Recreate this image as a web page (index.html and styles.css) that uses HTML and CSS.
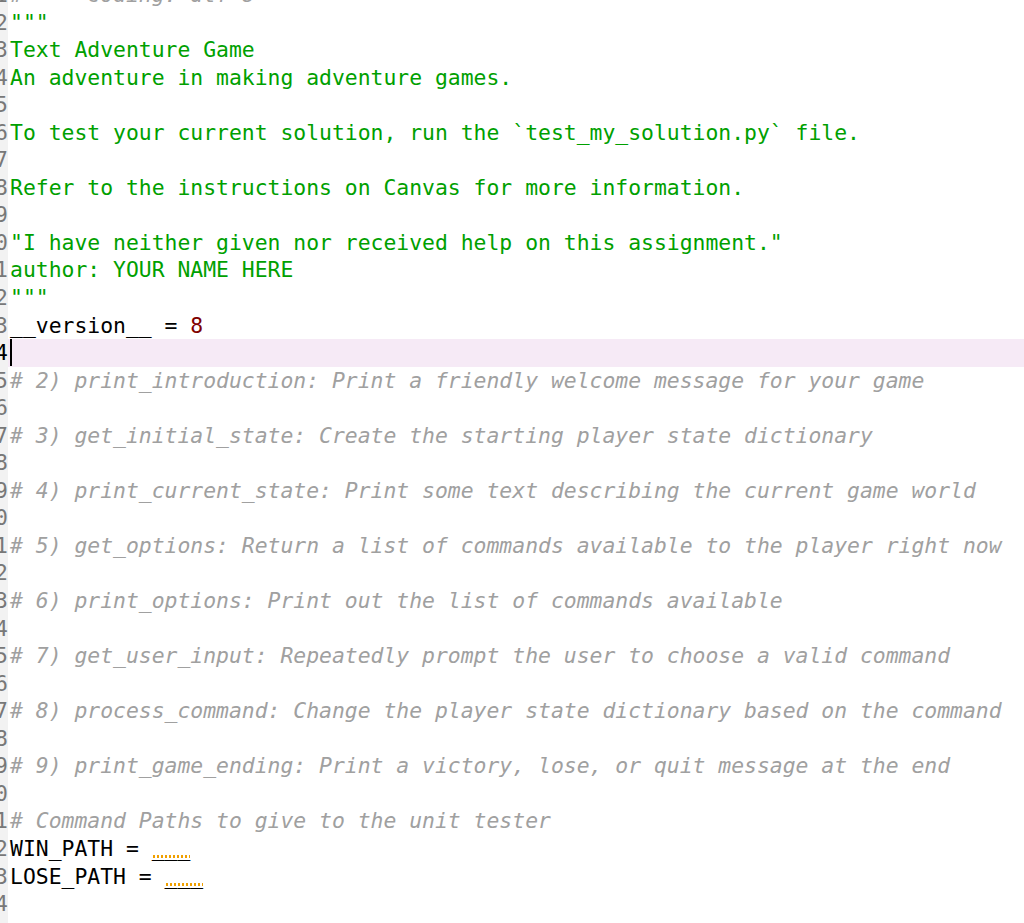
FILE: index.html
```html
<!DOCTYPE html>
<html>
<head>
<meta charset="utf-8">
<link rel="stylesheet" href="styles.css">
</head>
<body>
<div class="editor">
  <div class="line"><span class="num">1</span><span class="code cmt"># -*- coding: utf-8 -*-</span></div>
  <div class="line"><span class="num">2</span><span class="code str">"""</span></div>
  <div class="line"><span class="num">3</span><span class="code str">Text Adventure Game</span></div>
  <div class="line"><span class="num">4</span><span class="code str">An adventure in making adventure games.</span></div>
  <div class="line"><span class="num">5</span><span class="code str"></span></div>
  <div class="line"><span class="num">6</span><span class="code str">To test your current solution, run the `test_my_solution.py` file.</span></div>
  <div class="line"><span class="num">7</span><span class="code str"></span></div>
  <div class="line"><span class="num">8</span><span class="code str">Refer to the instructions on Canvas for more information.</span></div>
  <div class="line"><span class="num">9</span><span class="code str"></span></div>
  <div class="line"><span class="num">10</span><span class="code str">"I have neither given nor received help on this assignment."</span></div>
  <div class="line"><span class="num">11</span><span class="code str">author: YOUR NAME HERE</span></div>
  <div class="line"><span class="num">12</span><span class="code str">"""</span></div>
  <div class="line"><span class="num">13</span><span class="code plain">__version__ = <span class="numlit">8</span></span></div>
  <div class="line current"><span class="num">14</span><span class="code plain"><span class="caret"></span></span></div>
  <div class="line"><span class="num">15</span><span class="code cmt"># 2) print_introduction: Print a friendly welcome message for your game</span></div>
  <div class="line"><span class="num">16</span><span class="code"></span></div>
  <div class="line"><span class="num">17</span><span class="code cmt"># 3) get_initial_state: Create the starting player state dictionary</span></div>
  <div class="line"><span class="num">18</span><span class="code"></span></div>
  <div class="line"><span class="num">19</span><span class="code cmt"># 4) print_current_state: Print some text describing the current game world</span></div>
  <div class="line"><span class="num">20</span><span class="code"></span></div>
  <div class="line"><span class="num">21</span><span class="code cmt"># 5) get_options: Return a list of commands available to the player right now</span></div>
  <div class="line"><span class="num">22</span><span class="code"></span></div>
  <div class="line"><span class="num">23</span><span class="code cmt"># 6) print_options: Print out the list of commands available</span></div>
  <div class="line"><span class="num">24</span><span class="code"></span></div>
  <div class="line"><span class="num">25</span><span class="code cmt"># 7) get_user_input: Repeatedly prompt the user to choose a valid command</span></div>
  <div class="line"><span class="num">26</span><span class="code"></span></div>
  <div class="line"><span class="num">27</span><span class="code cmt"># 8) process_command: Change the player state dictionary based on the command</span></div>
  <div class="line"><span class="num">28</span><span class="code"></span></div>
  <div class="line"><span class="num">29</span><span class="code cmt"># 9) print_game_ending: Print a victory, lose, or quit message at the end</span></div>
  <div class="line"><span class="num">30</span><span class="code"></span></div>
  <div class="line"><span class="num">31</span><span class="code cmt"># Command Paths to give to the unit tester</span></div>
  <div class="line"><span class="num">32</span><span class="code plain">WIN_PATH = <span class="warn">___</span></span></div>
  <div class="line"><span class="num">33</span><span class="code plain">LOSE_PATH = <span class="warn">___</span></span></div>
  <div class="line"><span class="num">34</span><span class="code"></span></div>
  <div class="line"><span class="num">35</span><span class="code"></span></div>
</div>
</body>
</html>
```

FILE: styles.css
```css
html, body {
  margin: 0;
  padding: 0;
  background: #ffffff;
  overflow: hidden;
}

.editor {
  margin-top: -19px;
  display: flex;
  flex-direction: column;
}

.line {
  display: flex;
  height: 27.55px;
  line-height: 27.55px;
  white-space: pre;
}

.num {
  width: 8px;
  flex: 0 0 8px;
  background: #f2f2f2;
  color: #787878;
  font-family: "DejaVu Sans Mono", monospace;
  font-size: 21.4px;
  overflow: hidden;
  direction: rtl;
  text-align: left;
}

.code {
  flex: 1;
  padding-left: 2px;
  font-family: "DejaVu Sans Mono", monospace;
  font-size: 21.4px;
}

.current .code {
  background: #f6eaf6;
}

.current .num {
  color: #000000;
}

.str {
  color: #00a000;
}

.cmt {
  color: #a0a0a0;
  font-style: italic;
}

.plain {
  color: #000000;
}

.numlit {
  color: #800000;
}

.caret {
  display: inline-block;
  width: 2px;
  height: 27px;
  background: #000000;
  vertical-align: top;
}

.warn {
  background-image: radial-gradient(circle, #f0a000 45%, transparent 55%);
  background-size: 4px 3px;
  background-repeat: repeat-x;
  background-position: 0 19px;
}
```
